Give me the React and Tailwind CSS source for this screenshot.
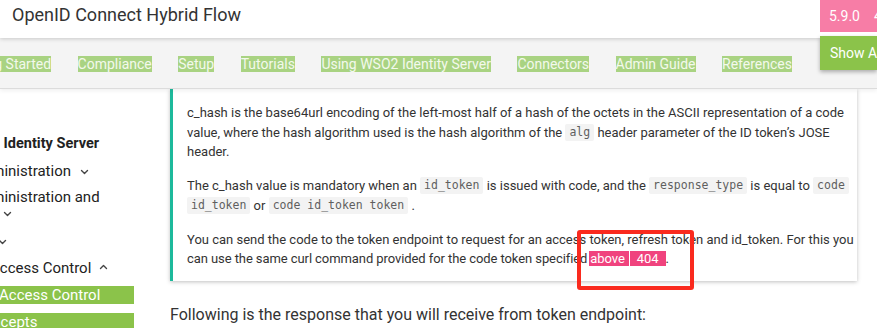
import React from "react";

const Chev = ({ up = false, className = "" }) => (
  <svg width="9" height="6" viewBox="0 0 9 6" className={className} fill="none" stroke="#444" strokeWidth="1.4" strokeLinecap="round" strokeLinejoin="round">
    {up ? <path d="M1.5 4.5 L4.5 1.5 L7.5 4.5" /> : <path d="M1.5 1.5 L4.5 4.5 L7.5 1.5" />}
  </svg>
);

const Code = ({ children }) => (
  <span className="inline-block rounded-[2px] bg-[#f3f3f3] px-[4px] text-[11.5px] leading-[17px] text-[#5f5f5f] font-['DejaVu_Sans_Mono',monospace] align-[1px]">
    {children}
  </span>
);

export default function App() {
  const nav = ["Getting Started", "Compliance", "Setup", "Tutorials", "Using WSO2 Identity Server", "Connectors", "Admin Guide", "References"];
  return (
    <div className="relative w-[877px] h-[328px] overflow-hidden bg-white font-['Roboto',sans-serif] text-[#333]">
      {/* header */}
      <div className="relative z-20 flex h-[38px] items-start bg-white pl-[12px] pt-[4px] shadow-[0_1px_4px_rgba(0,0,0,0.18)]">
        <span className="text-[18px] leading-[22px] text-[#333]">OpenID Connect Hybrid Flow</span>
      </div>
      {/* nav */}
      <div className="relative z-10 flex h-[51px] items-center gap-[26.5px] overflow-hidden border-b border-[#dcdcdc] bg-[#f4f4f4] pt-[2px] shadow-[0_2px_4px_rgba(0,0,0,0.06)]">
        {nav.map((n, i) => (
          <span key={n} className={`shrink-0 bg-[#a9d382] text-[14px] leading-[16px] text-[#f3f9ec] ${i === 0 ? "-ml-[43px]" : ""}`}>{n}</span>
        ))}
      </div>
      {/* body */}
      <div className="flex">
        <div className="w-[170px] shrink-0 overflow-hidden text-[15px] text-[#222]">
          <div className="mt-[46px] whitespace-nowrap">
            <div className="-ml-[40px] h-[27px] text-[14.5px] font-bold leading-[18px] text-[#222]">WSO2 Identity Server</div>
            <div className="-ml-[27px] flex h-[27px] items-start gap-[9px] leading-[18px]"><span>Administration</span><Chev className="mt-[7px]" /></div>
            <div className="-ml-[27px] leading-[17px]">Administration and</div>
            <div className="flex h-[27px] items-start leading-[17px]"><span className="ml-[3px] mt-[-1px]"><Chev className="mt-[6px]" /></span></div>
            <div className="flex h-[26px] items-start"><span className="-ml-[2px]"><Chev className="mt-[6px]" /></span></div>
            <div className="-ml-[10px] flex h-[18px] items-start gap-[8px] leading-[18px]"><span>Access Control</span><Chev up className="mt-[5px]" /></div>
            <div className="mt-[9px] flex h-[18px] w-[134px] items-center bg-[#8bc34a] leading-[18px] text-white"><span className="-ml-[1px]">Access Control</span></div>
            <div className="mt-[9px] flex h-[18px] w-[134px] items-center bg-[#8bc34a] leading-[18px] text-white"><span className="-ml-[26px]">Concepts</span></div>
          </div>
        </div>
        <div className="flex w-[687px] shrink-0 flex-col">
          <div className="border-l-[3px] border-[#1db99b] bg-white pb-[12px] pl-[14px] pr-[10px] pt-[14px] text-[13px] leading-[19.5px] text-[#333] shadow-[0_1px_4px_rgba(0,0,0,0.25)] whitespace-nowrap">
            <p>c_hash is the base64url encoding of the left-most half of a hash of the octets in the ASCII representation of a code</p>
            <p>value, where the hash algorithm used is the hash algorithm of the <Code>alg</Code> header parameter of the ID token’s JOSE</p>
            <p>header.</p>
            <p className="mt-[14.5px]">The c_hash value is mandatory when an <Code>id_token</Code> is issued with code, and the <Code>response_type</Code> is equal to <Code>code</Code></p>
            <p><Code>id_token</Code> or <Code>code id_token token</Code> .</p>
            <p className="mt-[14.5px]">You can send the code to the token endpoint to request for an access token, refresh token and id_token. For this you</p>
            <p className="tracking-[-0.08px]">can use the same curl command provided for the code token specified<span className="ml-[2px] bg-[#f0437e] px-[1px] text-white">above </span><span className="ml-[1px] bg-[#f0437e] px-[7px] text-white">404</span>.</p>
          </div>
          <p className="mt-[23px] text-[16px] leading-[22px] text-[#333]">Following is the response that you will receive from token endpoint:</p>
        </div>
      </div>
      {/* overlays */}
      <div className="absolute right-0 top-0 z-30 flex h-[32px] w-[57px] items-center overflow-hidden bg-[#f77da6] pl-[9px] text-[14px] text-white whitespace-nowrap">
        <span>5.9.0</span>
        <span className="mx-[7px] h-[16px] w-px bg-white"></span>
        <span>4</span>
      </div>
      <div className="absolute right-0 top-[36px] z-30 flex h-[34px] w-[57px] items-center overflow-hidden bg-[#8bc34a] pl-[10px] text-[14px] text-white whitespace-nowrap shadow-[0_2px_4px_rgba(0,0,0,0.3)]">
        Show All
      </div>
      <div className="absolute left-[577px] top-[230px] z-30 h-[60px] w-[117px] rounded-[3px] border-[4px] border-[#fa2a1e]"></div>
    </div>
  );
}
